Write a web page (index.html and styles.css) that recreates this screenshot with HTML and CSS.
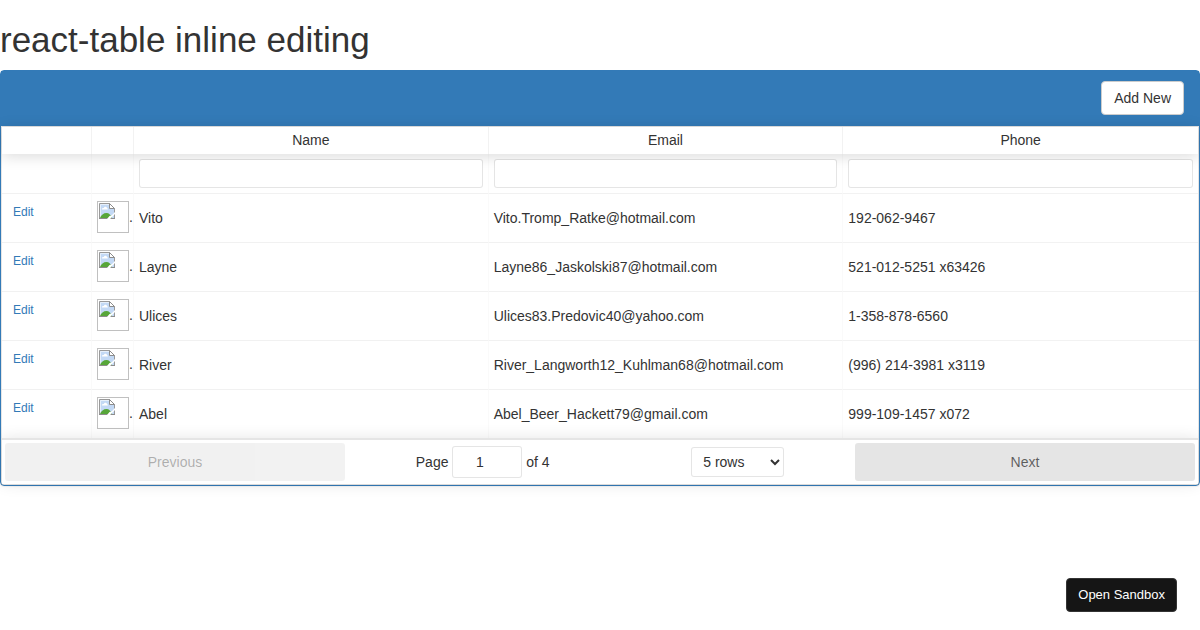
FILE: index.html
```html
<!DOCTYPE html>
<html lang="en">
<head>
    <meta charset="utf-8">
    <title>react-table inline editing</title>
    <meta name="viewport" content="width=device-width, initial-scale=1">
    <link rel="stylesheet" href="styles.css">
</head>
<body>
    <!-- placeholder shown when an avatar has no image -->
    <svg class="defs" width="0" height="0" aria-hidden="true">
        <symbol id="broken" viewBox="0 0 16 16">
            <path d="M0.5 0.5h10l5 5v10h-15z" fill="#c3d9f5" stroke="#999"/>
            <path d="M1.5 15v-13.500h8.500" fill="none" stroke="#e6effa"/>
            <path d="M3 6.500c0-1.500 1-1.800 1.800-1.500 0.500-1.800 3.200-1.500 3.200 0.300 1.200 0 1.200 1.200 0.500 1.200z" fill="#fff"/>
            <path d="M1 15c1-3 3.500-5 6.500-5 2.500 0 4.500 2 5.500 5z" fill="#57a639"/>
            <path d="M10.500 0.500v5h5z" fill="#fff" stroke="#8c8c8c"/>
            <path d="M0 15.500h16" stroke="#8c8c8c"/>
            <path d="M8 16l2.500-3 2-0.500 3.500-3.500v2l-5 5z" fill="#fff"/>
        </symbol>
    </svg>

    <h1>react-table inline editing</h1>

    <div class="panel">
        <div class="panel-heading">
            <button type="button" class="btn">Add New</button>
        </div>
        <div class="react-table">
            <table>
                <colgroup>
                    <col class="col-edit">
                    <col class="col-avatar">
                    <col>
                    <col>
                    <col>
                </colgroup>
                <thead>
                    <tr>
                        <th></th>
                        <th></th>
                        <th>Name</th>
                        <th>Email</th>
                        <th>Phone</th>
                    </tr>
                </thead>
                <tbody class="filters">
                    <tr>
                        <td></td>
                        <td></td>
                        <td><input type="text" aria-label="Filter name"></td>
                        <td><input type="text" aria-label="Filter email"></td>
                        <td><input type="text" aria-label="Filter phone"></td>
                    </tr>
                </tbody>
                <tbody class="rows">
                    <tr>
                        <td class="top"><button type="button" class="btn-link">Edit</button></td>
                        <td class="top"><div class="avatar"><span class="picture"><svg><use href="#broken"/></svg></span>.</div></td>
                        <td>Vito</td>
                        <td>Vito.Tromp_Ratke@hotmail.com</td>
                        <td>192-062-9467</td>
                    </tr>
                    <tr>
                        <td class="top"><button type="button" class="btn-link">Edit</button></td>
                        <td class="top"><div class="avatar"><span class="picture"><svg><use href="#broken"/></svg></span>.</div></td>
                        <td>Layne</td>
                        <td>Layne86_Jaskolski87@hotmail.com</td>
                        <td>521-012-5251 x63426</td>
                    </tr>
                    <tr>
                        <td class="top"><button type="button" class="btn-link">Edit</button></td>
                        <td class="top"><div class="avatar"><span class="picture"><svg><use href="#broken"/></svg></span>.</div></td>
                        <td>Ulices</td>
                        <td>Ulices83.Predovic40@yahoo.com</td>
                        <td>1-358-878-6560</td>
                    </tr>
                    <tr>
                        <td class="top"><button type="button" class="btn-link">Edit</button></td>
                        <td class="top"><div class="avatar"><span class="picture"><svg><use href="#broken"/></svg></span>.</div></td>
                        <td>River</td>
                        <td>River_Langworth12_Kuhlman68@hotmail.com</td>
                        <td>(996) 214-3981 x3119</td>
                    </tr>
                    <tr>
                        <td class="top"><button type="button" class="btn-link">Edit</button></td>
                        <td class="top"><div class="avatar"><span class="picture"><svg><use href="#broken"/></svg></span>.</div></td>
                        <td>Abel</td>
                        <td>Abel_Beer_Hackett79@gmail.com</td>
                        <td>999-109-1457 x072</td>
                    </tr>
                </tbody>
            </table>
            <div class="pagination">
                <button type="button" class="page-btn" disabled>Previous</button>
                <div class="center">
                    <span class="page-info">
                        <label for="page">Page</label>
                        <input id="page" type="number" value="1">
                        of 4
                    </span>
                    <select aria-label="rows per page">
                        <option>5 rows</option>
                        <option>10 rows</option>
                        <option>20 rows</option>
                        <option>25 rows</option>
                        <option>50 rows</option>
                        <option>100 rows</option>
                    </select>
                </div>
                <button type="button" class="page-btn">Next</button>
            </div>
        </div>
    </div>

    <button type="button" class="open-sandbox">Open Sandbox</button>
</body>
</html>
```
FILE: styles.css
```css
* {
    box-sizing: border-box;
}
body {
    margin: 0;
    font-family: "Helvetica Neue", Helvetica, "Liberation Sans", Arial, sans-serif;
    font-size: 14px;
    line-height: 20px;
    color: #333;
    background-color: #fff;
}
button, input, select {
    font-family: inherit;
    font-size: inherit;
    color: inherit;
    margin: 0;
}
h1 {
    margin: 20px 0 10px;
    font-size: 35px;
    font-weight: 500;
    line-height: 40px;
}
.defs {
    position: absolute;
}

/* panel */
.panel {
    margin-bottom: 20px;
    border: 1px solid #337ab7;
    border-radius: 4px;
    box-shadow: 0 1px 1px rgba(0,0,0,.05);
}
.panel-heading {
    display: flex;
    justify-content: flex-end;
    padding: 10px 15px;
    height: 55px;
    background-color: #337ab7;
}
.btn {
    height: 34px;
    padding: 6px 12px;
    line-height: 20px;
    background-color: #fff;
    border: 1px solid #ccc;
    border-radius: 4px;
}

/* table */
.react-table {
    border: 1px solid rgba(0,0,0,.1);
}
table {
    width: 100%;
    table-layout: fixed;
    border-collapse: separate;
    border-spacing: 0;
}
.col-edit {
    width: 90px;
}
.col-avatar {
    width: 42px;
}
thead {
    box-shadow: 0 2px 15px rgba(0,0,0,.15);
}
th {
    height: 27px;
    padding: 5px;
    font-weight: normal;
    line-height: 17px;
    border-right: 1px solid rgba(0,0,0,.05);
}
td {
    padding: 7px 5px;
    border-right: 1px solid rgba(0,0,0,.02);
    border-bottom: 1px solid rgba(0,0,0,.05);
}
th:last-child, td:last-child {
    border-right: 0;
}
.rows tr:last-child td {
    border-bottom: 0;
}
.rows td {
    height: 49px;
}
.rows tr:last-child td {
    height: 48px;
}
.rows .top {
    vertical-align: top;
}
.filters td {
    height: 40px;
    padding: 5px;
}
.react-table input, select {
    background-color: #fff;
    border: 1px solid rgba(0,0,0,.1);
    border-radius: 3px;
    background-clip: padding-box;
    outline: none;
}
.filters input {
    display: block;
    width: 100%;
    height: 29px;
    padding: 5px 7px;
}
.btn-link {
    display: block;
    height: 22px;
    padding: 1px 5px;
    font-size: 12px;
    line-height: 18px;
    color: #337ab7;
    background: none;
    border: 1px solid transparent;
}
.avatar {
    display: flex;
    align-items: center;
    width: 36px;
}
.picture {
    flex: none;
    width: 32px;
    height: 32px;
    padding: 1px;
    border: 1px solid silver;
}
.picture svg {
    display: block;
    width: 16px;
    height: 16px;
}

/* pagination */
.pagination {
    position: relative;
    display: flex;
    padding: 3px;
    border-top: 2px solid rgba(0,0,0,.1);
    box-shadow: 0 0 15px rgba(0,0,0,.1);
}
.page-btn {
    flex: 1;
    height: 38px;
    padding: 6px 0;
    color: rgba(0,0,0,.6);
    background-color: rgba(0,0,0,.1);
    border: 0;
    border-radius: 3px;
}
.page-btn:disabled {
    opacity: .5;
}
.center {
    flex: 1.5;
    display: flex;
    align-items: center;
    justify-content: space-around;
}
.page-info {
    margin: 3px 10px;
    white-space: nowrap;
}
.page-info input {
    width: 70px;
    height: 32px;
    padding: 5px 7px;
    text-align: center;
}
select {
    height: 30px;
    padding: 5px 7px;
}
.center select {
    margin: 3px 10px;
}

.open-sandbox {
    position: fixed;
    right: 23px;
    bottom: 18px;
    height: 34px;
    padding: 0 11px 2px;
    font-size: 13px;
    color: #fff;
    background-color: #151515;
    border: 1px solid #343434;
    border-radius: 4px;
}
```
